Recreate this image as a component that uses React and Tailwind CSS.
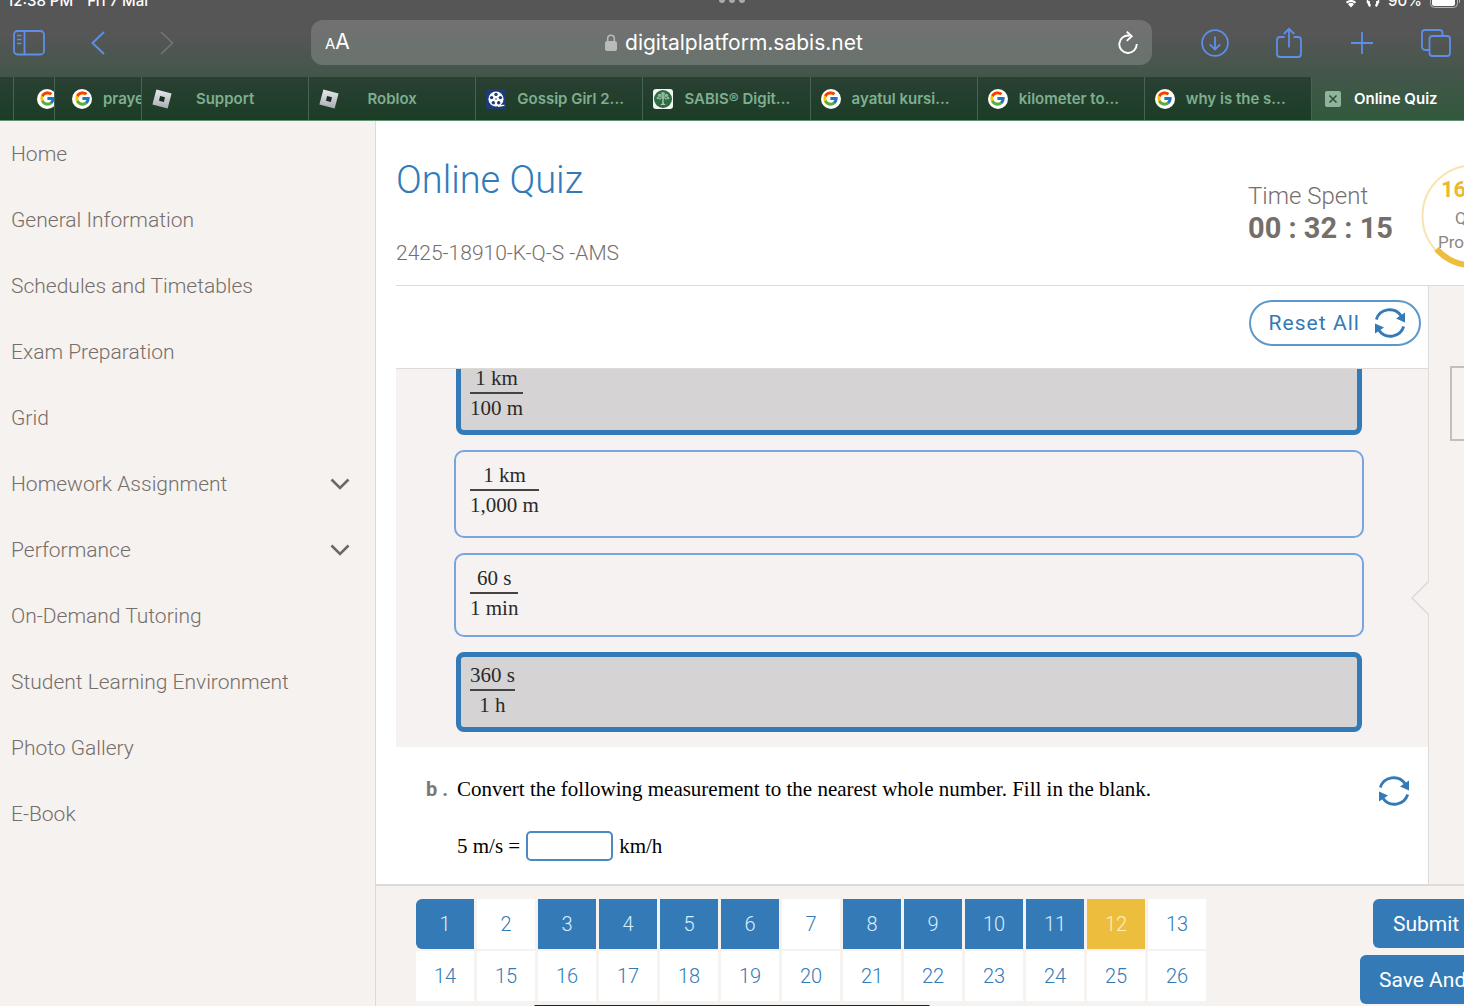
import React, { useState } from "react";
import { FcGoogle } from "react-icons/fc";

const menuItems = [
  { label: "Home" },
  { label: "General Information" },
  { label: "Schedules and Timetables" },
  { label: "Exam Preparation" },
  { label: "Grid" },
  { label: "Homework Assignment", expandable: true },
  { label: "Performance", expandable: true },
  { label: "On-Demand Tutoring" },
  { label: "Student Learning Environment" },
  { label: "Photo Gallery" },
  { label: "E-Book" },
];

const browserTabs = [
  { title: "Support", icon: "roblox", short: true },
  { title: "Roblox", icon: "roblox", short: true },
  { title: "Gossip Girl 2...", icon: "film" },
  { title: "SABIS® Digit...", icon: "sabis" },
  { title: "ayatul kursi...", icon: "google" },
  { title: "kilometer to...", icon: "google" },
  { title: "why is the s...", icon: "google" },
];

const options = [
  { id: 1, top: "1 km", bottom: "100 m", pad: "pb-2" },
  { id: 2, top: "1 km", bottom: "1,000 m", pad: "pb-[17px]" },
  { id: 3, top: "60 s", bottom: "1 min", pad: "pb-[13px]" },
  { id: 4, top: "360 s", bottom: "1 h", pad: "pb-2" },
];

const answered = [1, 3, 4, 5, 6, 8, 9, 10, 11];
const questions = Array.from({ length: 26 }, (_, i) => i + 1);

function TabIcon({ name }) {
  if (name === "google") {
    return (
      <span className="flex h-5 w-5 shrink-0 items-center justify-center rounded-full bg-white">
        <FcGoogle className="h-[17px] w-[17px]" />
      </span>
    );
  }
  if (name === "roblox") {
    return (
      <svg viewBox="0 0 20 20" className="h-5 w-5 shrink-0">
        <defs>
          <linearGradient id="rbx" x1="0" y1="0" x2="0" y2="1">
            <stop offset="0" stopColor="#e6e8ea" />
            <stop offset="1" stopColor="#a9adb2" />
          </linearGradient>
        </defs>
        <path d="M4.4 .6 19.6 4.6 15.6 19.4 .4 15.4Z" fill="url(#rbx)" />
        <path d="M8.100 7 13 8.200 11.900 13 7 11.800Z" fill="#1d2a23" />
      </svg>
    );
  }
  if (name === "film") {
    return (
      <svg viewBox="0 0 20 20" className="h-5 w-5 shrink-0">
        <rect width="20" height="20" rx="1" fill="#1f3a78" />
        <circle cx="10" cy="10" r="7.6" fill="#fff" />
        <path d="M12 17.2c2.500 0 4-1.200 6.400-.8" stroke="#fff" strokeWidth="1.400" fill="none" />
        <g fill="#1f3a78">
          <circle cx="10" cy="5.400" r="1.700" />
          <circle cx="14.400" cy="8.600" r="1.700" />
          <circle cx="12.700" cy="13.700" r="1.700" />
          <circle cx="7.300" cy="13.700" r="1.700" />
          <circle cx="5.600" cy="8.600" r="1.700" />
          <circle cx="10" cy="10" r=".8" />
        </g>
      </svg>
    );
  }
  return (
    <svg viewBox="0 0 20 20" className="h-5 w-5 shrink-0">
      <rect width="20" height="20" rx="3" fill="#f2f7f3" />
      <circle cx="10" cy="10" r="9" fill="#2f6b45" />
      <g fill="#8fb89c">
        <circle cx="10" cy="4.800" r="1.900" />
        <circle cx="6.600" cy="6.400" r="1.700" />
        <circle cx="13.400" cy="6.400" r="1.700" />
        <circle cx="10" cy="8" r="1.900" />
        <circle cx="4.900" cy="9" r="1.300" />
        <circle cx="15.100" cy="9" r="1.300" />
        <circle cx="7.200" cy="9.600" r="1.100" />
        <circle cx="12.800" cy="9.600" r="1.100" />
      </g>
      <path d="M9.500 9h1l.3 5.500 2.200 1.500H7l2.200-1.500Z" fill="#a9cbb3" />
    </svg>
  );
}

function RefreshArrows() {
  return (
    <svg viewBox="0 0 32 32" className="h-8 w-8 shrink-0" fill="none" stroke="#337ab7" strokeWidth="2.800">
      <path d="M2.300 12.500A14 14 0 0 1 27 8.600" />
      <path d="M29.700 19.500A14 14 0 0 1 5 23.400" />
      <path d="M31 5.500V15.500L22 11.500Z" fill="#337ab7" stroke="none" />
      <path d="M1 26.500V16.500L10 20.500Z" fill="#337ab7" stroke="none" />
    </svg>
  );
}

function BrowserBar() {
  return (
    <header className="shrink-0 border-b border-[#5d9272] bg-[linear-gradient(to_bottom,#565656_0%,#565656_28%,#43564a_64%,#32593c_100%)] font-[Inter,sans-serif]">
      <div className="flex h-2 items-end justify-between pl-[7px] pr-[3px] text-[15px] leading-[15px] font-medium text-white">
        <div className="flex gap-[14px]">
          <span>12:38 PM</span>
          <span>Fri 7 Mar</span>
        </div>
        <div className="flex items-end gap-2">
          <svg viewBox="0 0 14 12" className="h-3 w-[14px]" fill="#fff">
            <path d="M7 11.500 4 8.300a4.300 4.300 0 0 1 6 0Z" />
            <path d="M1.800 6a7.500 7.500 0 0 1 10.400 0l-1.400 1.500a5.500 5.500 0 0 0-7.600 0Z" />
          </svg>
          <svg viewBox="0 0 14 14" className="h-[14px] w-[14px]" fill="none" stroke="#fff" strokeWidth="1.500">
            <path d="M1.500 9V7a5.500 5.500 0 0 1 11 0v2" />
            <path d="M2.500 7c0 3 .8 4.500 2 5M11.500 7c0 3-.8 4.500-2 5" strokeWidth="2.500" />
          </svg>
          <span>90%</span>
          <svg viewBox="0 0 31 14" className="h-[14px] w-[31px]">
            <rect x=".5" y=".5" width="27" height="13" rx="4" fill="none" stroke="#b5b5b5" />
            <rect x="2" y="2" width="23" height="10" rx="2.500" fill="#fff" />
            <path d="M29 5v4c1.500-.5 1.500-3.500 0-4Z" fill="#b5b5b5" />
          </svg>
        </div>
      </div>
      {/* Multitasking dots */}
      <div className="absolute top-0 left-1/2 flex h-[3px] -translate-x-1/2 items-end gap-1 overflow-hidden">
        <span className="h-[6px] w-[6px] shrink-0 rounded-full bg-[#a9a9a9]" />
        <span className="h-[6px] w-[6px] shrink-0 rounded-full bg-[#a9a9a9]" />
        <span className="h-[6px] w-[6px] shrink-0 rounded-full bg-[#a9a9a9]" />
      </div>

      <div className="flex items-center py-3">
        <div className="flex w-[311px] shrink-0 items-center gap-[37px] pl-[13px] text-[#5d8fe8]">
          <button aria-label="Show sidebar">
            <svg viewBox="0 0 32 26" className="h-[26px] w-8" fill="none" stroke="currentColor" strokeWidth="1.800">
              <rect x="1" y="1" width="30" height="23.500" rx="3.500" />
              <path d="M11.500 1v23.500" />
              <path d="M4 5.500h4.500M4 9.500h4.500M4 13.500h4.500" strokeWidth="1.300" />
            </svg>
          </button>
          <button aria-label="Back" className="flex w-8 justify-center">
            <svg viewBox="0 0 14 24" className="h-6 w-[14px]" fill="none" stroke="currentColor" strokeWidth="2">
              <path d="M13 1 1.500 12 13 23" />
            </svg>
          </button>
          <button aria-label="Forward" className="flex w-8 justify-center text-[#747674]">
            <svg viewBox="0 0 14 24" className="h-6 w-[14px]" fill="none" stroke="currentColor" strokeWidth="1.600">
              <path d="M1 1 12.500 12 1 23" />
            </svg>
          </button>
        </div>

        <div className="flex h-[45px] flex-1 items-center justify-between rounded-xl bg-[linear-gradient(to_bottom,#717171,#69736d)] px-[14px] text-white">
          <button aria-label="Page settings" className="text-[21px] leading-6">
            <span className="text-[15px]">A</span>A
          </button>
          <div className="flex items-center gap-2 text-[21px] leading-7">
            <svg viewBox="0 0 12 17" className="h-[17px] w-3">
              <rect x="0" y="7" width="12" height="10" rx="2" fill="#b9bbba" />
              <path d="M2.700 8V4.500a3.300 3.300 0 0 1 6.600 0V8" fill="none" stroke="#b9bbba" strokeWidth="1.500" />
            </svg>
            digitalplatform.sabis.net
          </div>
          <button aria-label="Reload">
            <svg viewBox="0 0 20 24" className="h-6 w-5" fill="none" stroke="#fff" strokeWidth="1.900">
              <path d="M11.500 4.700A8.700 8.700 0 1 0 18.700 13" />
              <path d="M8.800 .8 13.700 5.200 8.800 9.900" />
            </svg>
          </button>
        </div>

        <div className="flex w-[312px] shrink-0 items-center justify-between pl-[47px] pr-3 text-[#5d8fe8]">
          <button aria-label="Downloads" className="flex w-8 justify-center">
            <svg viewBox="0 0 28 28" className="h-7 w-7" fill="none" stroke="currentColor" strokeWidth="1.800">
              <circle cx="14" cy="14" r="12.900" />
              <path d="M14 7.500v13M8.800 15.300 14 20.500l5.200-5.200" />
            </svg>
          </button>
          <button aria-label="Share" className="flex w-8 justify-center">
            <svg viewBox="0 0 26 32" className="h-8 w-[26px]" fill="none" stroke="currentColor" strokeWidth="1.800">
              <path d="M8.500 10H4a3 3 0 0 0-3 3v14a3 3 0 0 0 3 3h18a3 3 0 0 0 3-3V13a3 3 0 0 0-3-3h-4.500" />
              <path d="M13 20.500V2M7.800 7 13 1.800 18.200 7" />
            </svg>
          </button>
          <button aria-label="New tab" className="flex w-8 justify-center">
            <svg viewBox="0 0 22 22" className="h-[22px] w-[22px]" fill="none" stroke="currentColor" strokeWidth="1.800">
              <path d="M11 0v22M0 11h22" />
            </svg>
          </button>
          <button aria-label="Tab overview" className="flex w-8 justify-center">
            <svg viewBox="0 0 30 28" className="h-7 w-[30px]" fill="none" stroke="currentColor" strokeWidth="1.800">
              <rect x="8.500" y="7" width="20.500" height="20" rx="3" />
              <path d="M8.500 21H4a3 3 0 0 1-3-3V4a3 3 0 0 1 3-3h14.500a3 3 0 0 1 3 3v3" />
            </svg>
          </button>
        </div>
      </div>

      <nav className="flex h-[43px] text-[15px] leading-5 font-semibold text-[#7fae90]">
        <div className="w-[14px] shrink-0 border-r border-[#456552] bg-[linear-gradient(to_bottom,#2a4033,#1b3d25)]" />
        <button
          aria-label="Google"
          className="flex w-[41px] shrink-0 items-center overflow-hidden border-r border-[#456552] bg-[linear-gradient(to_bottom,#2a4033,#1b3d25)] pl-[23px]"
        >
          <TabIcon name="google" />
        </button>
        <button className="flex w-[87px] shrink-0 items-center gap-[11px] overflow-hidden border-r border-[#456552] bg-[linear-gradient(to_bottom,#2a4033,#1b3d25)] pl-[17px]">
          <TabIcon name="google" />
          praye
        </button>
        {browserTabs.map((tab) => (
          <button
            key={tab.title}
            className="flex min-w-0 flex-1 items-center overflow-hidden border-r border-[#456552] bg-[linear-gradient(to_bottom,#2a4033,#1b3d25)] pl-[10px] whitespace-nowrap"
          >
            <TabIcon name={tab.icon} />
            <span className={tab.short ? "flex-1 pr-[30px] text-center" : "flex-1 pl-[11px] text-left"}>
              {tab.title}
            </span>
          </button>
        ))}
        <button className="flex w-[152px] shrink-0 items-center gap-[13px] pl-[13px] whitespace-nowrap text-white">
          <svg viewBox="0 0 16 16" className="h-4 w-4 shrink-0">
            <rect width="16" height="16" rx="2" fill="#8fb49c" />
            <path d="m4.500 4.500 7 7M11.500 4.500l-7 7" stroke="#2d4c38" strokeWidth="1.500" />
          </svg>
          Online Quiz
        </button>
      </nav>
    </header>
  );
}

function Sidebar() {
  return (
    <aside className="w-[376px] shrink-0 border-r border-[#dedad8] bg-[#f5f2f0]">
      <ul>
        {menuItems.map((item) => (
          <li key={item.label}>
            <a
              href="#"
              className="flex h-[66px] items-center justify-between pl-[11px] pr-[25px] text-[21px] leading-7 font-light text-[#766e6a]"
            >
              {item.label}
              {item.expandable && (
                <svg viewBox="0 0 20 12" className="h-3 w-5" fill="none" stroke="#6f6763" strokeWidth="2.600">
                  <path d="m1.500 1.500 8.500 8.500 8.500-8.500" />
                </svg>
              )}
            </a>
          </li>
        ))}
      </ul>
    </aside>
  );
}

function Option({ option, selected, onClick }) {
  return (
    <button
      onClick={onClick}
      aria-pressed={selected}
      className={`flex ${option.pad} ${
        selected
          ? "mx-[2px] rounded-lg border-[5px] border-[#337ab7] bg-[#d5d3d3] pt-1 pl-[9px]"
          : "rounded-[10px] border-2 border-[#78a5e0] pt-[9px] pl-[14px]"
      }`}
    >
      <span className="flex flex-col text-center font-['Liberation_Serif',serif] text-[21px] leading-7 text-[#2a2a2a]">
        <span>{option.top}</span>
        <span className="border-t-2 border-[#444]">{option.bottom}</span>
      </span>
    </button>
  );
}

export default function App() {
  const [selected, setSelected] = useState([1, 4]);
  const [answer, setAnswer] = useState("");
  const [current, setCurrent] = useState(12);

  const toggleOption = (id) => {
    setSelected((prev) =>
      prev.includes(id) ? prev.filter((o) => o !== id) : [...prev, id]
    );
  };

  const resetAll = () => {
    setSelected([]);
    setAnswer("");
  };

  return (
    <div className="flex h-screen flex-col overflow-hidden bg-white font-[Roboto,sans-serif]">
      <BrowserBar />

      <div className="flex min-h-0 flex-1">
        <Sidebar />

        <div className="flex min-w-0 flex-1 flex-col">
          {/* Quiz header */}
          <div className="ml-5 flex h-[165px] shrink-0 justify-between border-b border-[#dedad8]">
            <div className="pt-[35px] font-light">
              <h1 className="text-[38px] leading-[48px] text-[#337ab7]">Online Quiz</h1>
              <p className="mt-[35px] text-[21px] leading-7 text-[#766e6a]">2425-18910-K-Q-S -AMS</p>
            </div>
            <div className="flex">
              <div className="w-[173px] pt-[59px] text-[#766e6a]">
                <p className="text-[24px] leading-8 font-light">Time Spent</p>
                <p className="text-[29px] leading-8 font-bold">00 : 32 : 15</p>
              </div>
              <div className="relative mt-[43px] h-[104px] w-[43px] overflow-hidden text-[#8d8683]">
                <svg viewBox="0 0 104 104" className="absolute top-0 left-0 h-[104px] w-[104px]" fill="none">
                  <circle cx="52" cy="52" r="50.500" stroke="#f9e3b0" strokeWidth="2" />
                  <path d="M15.500 85A49 49 0 0 0 88.500 85" stroke="#edbd3e" strokeWidth="6" />
                </svg>
                <p className="relative pt-3 pl-5 text-[22px] leading-7 font-bold text-[#edb72f]">16</p>
                <p className="relative pl-[34px] text-[17px] leading-7">Q</p>
                <p className="relative pl-[17px] text-[17px] leading-5">Pro</p>
              </div>
            </div>
          </div>

          <div className="flex min-h-0 flex-1">
            <div className="flex min-w-0 flex-1 flex-col pl-5">
              <div className="flex h-[83px] shrink-0 items-center justify-end border-b border-[#dedad8] pr-[7px] pb-2">
                <button
                  onClick={resetAll}
                  className="flex h-[46px] items-center gap-[14px] rounded-full border-2 border-[#5c98ca] pr-[13px] pl-[18px] text-[21px] leading-7 tracking-wider text-[#337ab7]"
                >
                  Reset All
                  <RefreshArrows />
                </button>
              </div>

              {/* Question body, part a is scrolled under the toolbar */}
              <div className="min-h-0 flex-1 overflow-hidden">
                <div className="overflow-hidden bg-[#f5f2f1] pb-[15px]">
                  <div className="-mt-[14px] flex flex-col gap-[15px] pr-16 pl-[58px]">
                    {options.map((option) => (
                      <Option
                        key={option.id}
                        option={option}
                        selected={selected.includes(option.id)}
                        onClick={() => toggleOption(option.id)}
                      />
                    ))}
                  </div>
                </div>

                <div className="flex items-start justify-between pt-7 pr-[18px] pl-[30px]">
                  <div className="flex font-['Liberation_Serif',serif] text-[21px] leading-7 text-black">
                    <span className="w-[31px] shrink-0 font-[Roboto,sans-serif] text-[20px] font-bold text-[#7d7672]">
                      b .
                    </span>
                    <div>
                      <p>Convert the following measurement to the nearest whole number. Fill in the blank.</p>
                      <label className="mt-7 flex items-center gap-[6px]">
                        5 m/s =
                        <input
                          type="text"
                          value={answer}
                          onChange={(e) => setAnswer(e.target.value)}
                          aria-label="Speed in km/h"
                          className="h-[30px] w-[87px] rounded-[5px] border-2 border-[#4a8ac0] bg-white px-2 outline-none"
                        />
                        km/h
                      </label>
                    </div>
                  </div>
                  <button aria-label="Reset part b" onClick={() => setAnswer("")}>
                    <RefreshArrows />
                  </button>
                </div>
              </div>
            </div>

            {/* Collapsed side panel */}
            <div className="relative w-9 shrink-0 border-l border-[#dedad8] bg-[#f5f2f0] pt-[80px] pl-[21px]">
              <div className="h-[75px] border-2 border-r-0 border-[#c3bfbd]" />
              <button aria-label="Open panel" className="absolute top-[294px] -left-[18px]">
                <svg viewBox="0 0 18 36" className="block h-9 w-[18px]">
                  <path d="M18 1 1 18 18 35Z" fill="#f5f2f0" />
                  <path d="M18 1 1 18 18 35" fill="none" stroke="#dedad8" strokeWidth="1.500" />
                </svg>
              </button>
            </div>
          </div>

          <footer className="flex h-[122px] shrink-0 items-start justify-between border-t-2 border-[#dedad8] bg-[#f5f2f0] pt-[13px] pl-10">
            <div className="grid grid-cols-13 gap-x-[3px] gap-y-[2px]">
              {questions.map((q) => (
                <button
                  key={q}
                  onClick={() => setCurrent(q)}
                  className={`h-[50px] w-[58px] text-[20px] leading-7 font-light first:rounded-l-md ${
                    q === current
                      ? "bg-[#edbd3e] text-[#fff0b8]"
                      : answered.includes(q)
                        ? "bg-[#337ab7] text-[#d9efff]"
                        : "bg-white text-[#337ab7]"
                  }`}
                >
                  {q}
                </button>
              ))}
            </div>
            <div className="flex flex-col items-end gap-[7px] text-[21px] leading-7 whitespace-nowrap text-white">
              <button className="h-[49px] w-[91px] rounded-l-md bg-[#337ab7] pl-5 text-left">Submit</button>
              <button className="h-[49px] w-[104px] overflow-hidden rounded-l-md bg-[#337ab7] pl-[19px] text-left">
                Save And
              </button>
            </div>
          </footer>
        </div>
      </div>

      {/* Home indicator */}
      <div className="fixed bottom-0 left-1/2 h-px w-[395px] -translate-x-1/2 bg-[#222]" />
    </div>
  );
}
